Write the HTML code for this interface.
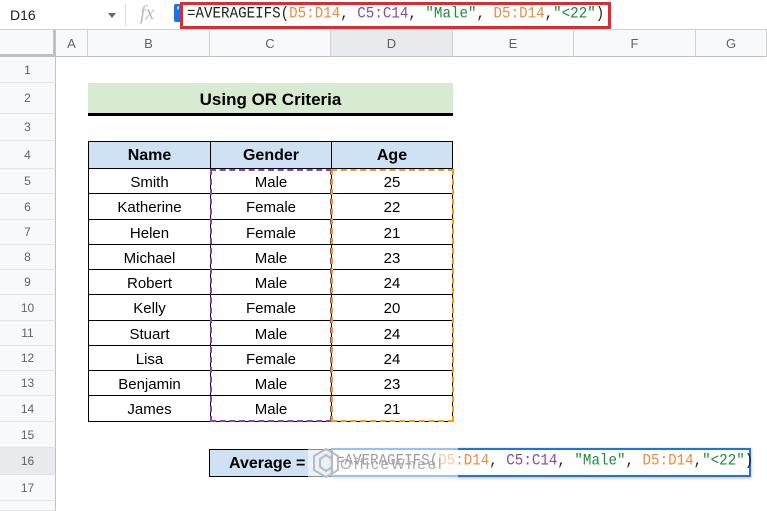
<!DOCTYPE html>
<html><head><meta charset="utf-8"><style>
*{margin:0;padding:0;box-sizing:border-box}
body{width:767px;height:505px;overflow:hidden;background:#fff;font-family:"Liberation Sans",Arial,sans-serif;position:relative}
.a{position:absolute}
.rh{position:absolute;left:0;width:56px;background:#f8f9fa;border-right:1px solid #c0c0c0;border-bottom:1px solid #e2e3e3;color:#5f6368;font-size:12px;display:flex;align-items:center;justify-content:center}
.ch{position:absolute;top:30px;height:27px;background:#f8f9fa;border-right:1px solid #d0d0d0;border-bottom:1px solid #c0c0c0;color:#5f6368;font-size:13px;display:flex;align-items:center;justify-content:center}
.c{position:absolute;display:flex;align-items:center;justify-content:center;font-size:15px;color:#000;border-left:1px solid #000;border-bottom:1px solid #000}
.mono{font-family:"Liberation Mono","DejaVu Sans Mono",monospace;font-size:14.2px;letter-spacing:0;transform:scaleY(1.12);transform-origin:0 0}
</style></head><body>
<div class="a" style="left:0;top:0;width:767px;height:30px;border-bottom:1px solid #d0d0d0;background:#fff"></div>
<div class="a" style="left:10px;top:7px;font-size:14px;color:#222">D16</div>
<div class="a" style="left:108px;top:13px;width:0;height:0;border-left:4px solid transparent;border-right:4px solid transparent;border-top:5px solid #666"></div>
<div class="a" style="left:125px;top:4px;width:1px;height:22px;background:#ddd"></div>
<div class="a" style="left:140px;top:2px;font-size:20px;font-style:italic;color:#bbb;font-family:'Liberation Serif',serif">fx</div>
<div class="a" style="left:174px;top:4px;width:8px;height:18px;background:#1a73e8;border-radius:2px;color:#fff;font-size:12px;font-weight:bold;text-align:center">'</div>
<div class="a" style="left:180px;top:2px;width:431px;height:27px;border:3px solid #e8262c"></div>
<div class="a mono" style="left:187px;top:5px;color:#222;white-space:nowrap">=AVERAGEIFS(<span style="color:#f08a3c">D5:D14</span>, <span style="color:#8a4a9e">C5:C14</span>, <span style="color:#1e8a3c">"Male"</span>, <span style="color:#f08a3c">D5:D14</span>,<span style="color:#1e8a3c">"&lt;22"</span>)</div>
<div class="a" style="left:0;top:30px;width:56px;height:27px;background:#f8f9fa;border-right:3px solid #c0c0c0;border-bottom:3px solid #c0c0c0"></div>
<div class="ch" style="left:56px;width:32px">A</div>
<div class="ch" style="left:88px;width:122px">B</div>
<div class="ch" style="left:210px;width:121px">C</div>
<div class="ch" style="left:331px;width:122px;background:#e8eaed">D</div>
<div class="ch" style="left:453px;width:121px">E</div>
<div class="ch" style="left:574px;width:122px">F</div>
<div class="ch" style="left:696px;width:71px">G</div>
<div class="rh" style="top:57px;height:26px">1</div>
<div class="rh" style="top:83px;height:31px">2</div>
<div class="rh" style="top:114px;height:27px">3</div>
<div class="rh" style="top:141px;height:28px">4</div>
<div class="rh" style="top:169px;height:25px">5</div>
<div class="rh" style="top:194px;height:26px">6</div>
<div class="rh" style="top:220px;height:25px">7</div>
<div class="rh" style="top:245px;height:25px">8</div>
<div class="rh" style="top:270px;height:25px">9</div>
<div class="rh" style="top:295px;height:26px">10</div>
<div class="rh" style="top:321px;height:25px">11</div>
<div class="rh" style="top:346px;height:25px">12</div>
<div class="rh" style="top:371px;height:25px">13</div>
<div class="rh" style="top:396px;height:26px">14</div>
<div class="rh" style="top:422px;height:26px">15</div>
<div class="rh" style="top:448px;height:27px;background:#e8eaed">16</div>
<div class="rh" style="top:475px;height:26px">17</div>
<div class="rh" style="top:501px;height:10px"></div>
<div class="a" style="left:88px;top:83px;width:365px;height:33px;background:#d9ead3;border-bottom:3px solid #000;display:flex;align-items:center;justify-content:center;font-weight:bold;font-size:17px;padding-top:4px">Using OR Criteria</div>
<div class="a" style="left:88px;top:141px;width:365px;height:28px;background:#cfe2f3;border:1px solid #000"></div>
<div class="c" style="left:88px;top:141px;width:122px;height:28px;font-weight:bold;font-size:16px;border-top:1px solid #000;padding-top:2px">Name</div>
<div class="c" style="left:210px;top:141px;width:121px;height:28px;font-weight:bold;font-size:16px;border-top:1px solid #000;padding-top:2px">Gender</div>
<div class="c" style="left:331px;top:141px;width:122px;height:28px;font-weight:bold;font-size:16px;border-top:1px solid #000;border-right:1px solid #000;padding-top:2px">Age</div>
<div id="rows"></div>
<script>
var d=[["Smith","Male",25],["Katherine","Female",22],["Helen","Female",21],["Michael","Male",23],["Robert","Male",24],["Kelly","Female",20],["Stuart","Male",24],["Lisa","Female",24],["Benjamin","Male",23],["James","Male",21]];
var h="";
for(var i=0;i<10;i++){var t=169+Math.round(i*25.25),n=169+Math.round((i+1)*25.25),hh=n-t;
h+='<div class="c" style="left:88px;top:'+t+'px;width:122px;height:'+hh+'px;padding-top:2px">'+d[i][0]+'</div>';
h+='<div class="c" style="left:210px;top:'+t+'px;width:121px;height:'+hh+'px;padding-top:2px">'+d[i][1]+'</div>';
h+='<div class="c" style="left:331px;top:'+t+'px;width:122px;height:'+hh+'px;border-right:1px solid #000;padding-top:2px">'+d[i][2]+'</div>';}
document.getElementById("rows").innerHTML=h;
</script>
<div class="a" style="left:210px;top:169px;width:122px;height:253px;border:2px dashed #8e44ad"></div>
<div class="a" style="left:331px;top:169px;width:123px;height:253px;border:2px dashed #f39c12"></div>
<div class="a" style="left:209px;top:449px;width:123px;height:28px;background:#cfe2f3;border:1px solid #000;font-weight:bold;font-size:16px;padding-left:19px;padding-top:2px;display:flex;align-items:center">Average =</div>
<div class="a" style="left:331px;top:448px;width:420px;height:29px;background:#fff;border:2px solid #1a73e8;box-shadow:0 1px 3px rgba(0,0,0,.3)"></div>
<div class="a mono" style="left:336px;top:452px;color:#222;white-space:nowrap">=AVERAGEIFS(<span style="color:#f08a3c">D5:D14</span>, <span style="color:#8a4a9e">C5:C14</span>, <span style="color:#1e8a3c">"Male"</span>, <span style="color:#f08a3c">D5:D14</span>,<span style="color:#1e8a3c">"&lt;22"</span>)</div>
<div class="a" style="left:308px;top:444px;width:150px;height:36px;background:rgba(255,255,255,0.55)"></div>
<div class="a" style="left:340px;top:456px;font-size:15px;color:#aaa;letter-spacing:2px">OfficeWheel</div>
<svg class="a" style="left:312px;top:447px" width="28" height="32" viewBox="0 0 28 32"><path d="M14 2 L26 9 V23 L14 30 L2 23 V9 Z" fill="none" stroke="#bbb" stroke-width="2"/><path d="M14 8 L20 12 V20 L14 24 L8 20 V12 Z" fill="none" stroke="#bbb" stroke-width="2"/></svg>
</body></html>
